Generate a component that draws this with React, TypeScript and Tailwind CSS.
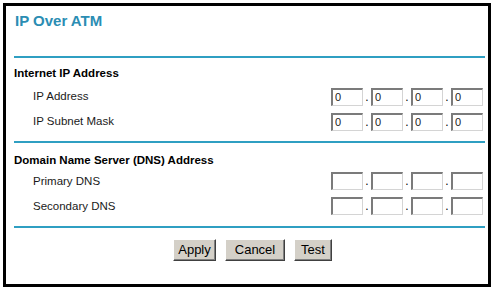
import React from "react";

function IpGroup({ values }: { values: string[] }) {
  return (
    <div className="flex items-center mr-[2px]">
      {values.map((v, i) => (
        <React.Fragment key={i}>
          {i > 0 && (
            <span className="w-[8px] text-center text-[12px] leading-[18px] text-black">.</span>
          )}
          <input
            type="text"
            readOnly
            value={v}
            className="w-[32px] h-[18px] bg-white pl-[2px] text-[11px] text-[#222] outline-none border-t-2 border-l-2 border-b border-r border-t-[#7b7b7b] border-l-[#7b7b7b] border-b-[#d4d4d4] border-r-[#d4d4d4]"
          />
        </React.Fragment>
      ))}
    </div>
  );
}

function Row({ label, values, shift }: { label: string; values: string[]; shift?: boolean }) {
  return (
    <div className="h-[25px] flex items-center justify-between">
      <span className={"pl-[19px] text-[11.5px] text-[#1a1a1a] " + (shift ? "pt-[3px]" : "")}>{label}</span>
      <IpGroup values={values} />
    </div>
  );
}

function Btn({ label, w }: { label: string; w: string }) {
  return (
    <button
      className={
        "h-[22px] bg-[#d4d0c8] text-[13px] text-black border border-t-white border-l-white border-r-[#404040] border-b-[#404040] shadow-[inset_-1px_-1px_0_#808080] " +
        w
      }
    >
      {label}
    </button>
  );
}

export default function App() {
  const zeros = ["0", "0", "0", "0"];
  const empty = ["", "", "", ""];
  return (
    <div className="w-[496px] h-[291px] bg-white pt-[3px] pl-[3px] font-['Liberation_Sans',Arial,sans-serif]">
      <div className="w-[488px] h-[284px] border-[3px] border-black flex flex-col pl-[8px] pr-[3px] pt-[6px]">
        <div className="h-[18px] leading-[18px] text-[15px] font-bold text-[#2b8db3] pl-[1px]">IP Over ATM</div>
        <div className="mt-[26px] h-[2px] bg-[#2f9fc2]" />
        <div className="mt-[6px] h-[20px] flex items-center text-[11.5px] font-bold text-black">
          Internet IP Address
        </div>
        <Row label="IP Address" values={zeros} />
        <Row label="IP Subnet Mask" values={zeros} />
        <div className="mt-[7px] h-[2px] bg-[#2f9fc2]" />
        <div className="mt-[11px] h-[14px] flex items-center text-[11.5px] font-bold text-black">
          Domain Name Server (DNS) Address
        </div>
        <Row label="Primary DNS" values={empty} shift />
        <Row label="Secondary DNS" values={empty} shift />
        <div className="mt-[8px] h-[2px] bg-[#2f9fc2]" />
        <div className="mt-[11px] flex justify-center gap-[9px] pl-[6px]">
          <Btn label="Apply" w="w-[43px]" />
          <Btn label="Cancel" w="w-[60px]" />
          <Btn label="Test" w="w-[38px]" />
        </div>
      </div>
    </div>
  );
}
